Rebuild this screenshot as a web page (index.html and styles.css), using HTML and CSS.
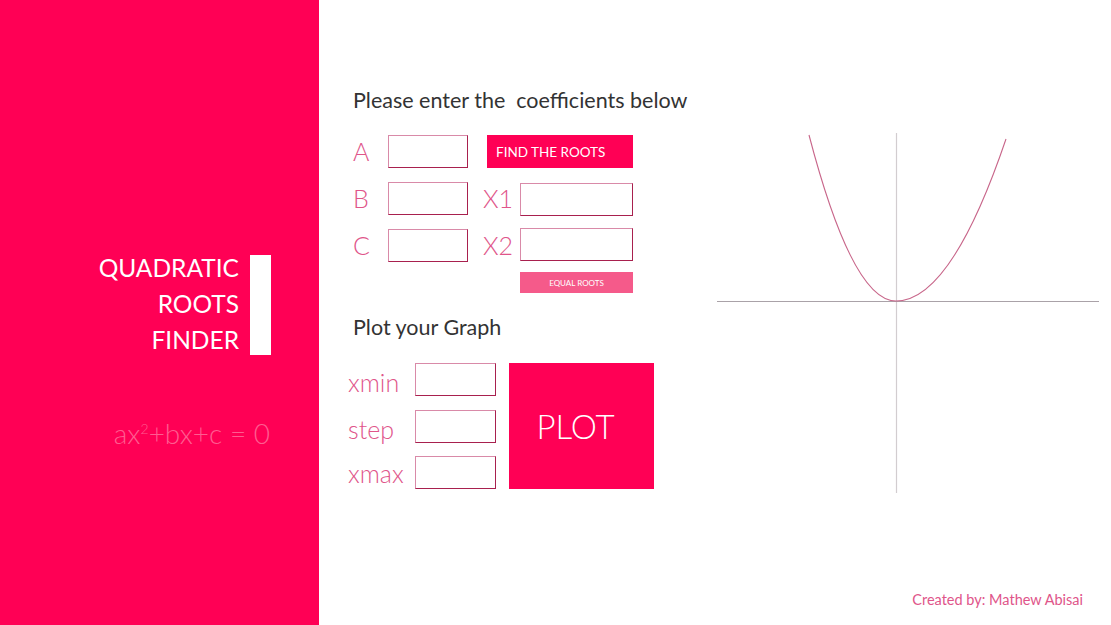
FILE: index.html
```html
<!DOCTYPE html>
<html lang="en">
<head>
<meta charset="utf-8">
<title>Quadratic Roots Finder</title>
<link rel="stylesheet" href="styles.css">
</head>
<body>
<div class="app">
  <aside class="sidebar">
    <div class="brand">
      <h1 class="brand-title">QUADRATIC<br>ROOTS<br>FINDER</h1>
      <div class="brand-bar"></div>
    </div>
    <div class="equation">ax<sup>2</sup>+bx+c = 0</div>
  </aside>
  <main class="content">
    <section class="forms">
      <h2 class="heading">Please enter the&nbsp; coefficients below</h2>
      <div class="coef-grid">
        <label class="lbl lbl-a">A</label>
        <div class="box box-a"></div>
        <button class="btn-find">FIND THE ROOTS</button>
        <label class="lbl lbl-b">B</label>
        <div class="box box-b"></div>
        <label class="lbl lbl-x1">X1</label>
        <div class="box box-x1"></div>
        <label class="lbl lbl-c">C</label>
        <div class="box box-c"></div>
        <label class="lbl lbl-x2">X2</label>
        <div class="box box-x2"></div>
        <button class="btn-equal">EQUAL ROOTS</button>
      </div>
      <h2 class="heading heading-plot">Plot your Graph</h2>
      <div class="plot-grid">
        <label class="lbl plbl r1">xmin</label>
        <div class="box pbox r1"></div>
        <label class="lbl plbl r2">step</label>
        <div class="box pbox r2"></div>
        <label class="lbl plbl r3">xmax</label>
        <div class="box pbox r3"></div>
        <button class="btn-plot">PLOT</button>
      </div>
    </section>
    <section class="graph">
      <svg class="graph-svg" width="382" height="360" viewBox="0 0 382 360">
        <line x1="179.5" y1="0" x2="179.5" y2="360" stroke="#d2cdd0" stroke-width="1.2"/>
        <line x1="0" y1="168.5" x2="382" y2="168.5" stroke="#aaa2a8" stroke-width="1.2"/>
        <path d="M92,2 Q135.5,168 179,168 Q234,168 289,6" fill="none" stroke="#c8668a" stroke-width="1.1"/>
      </svg>
    </section>
    <footer class="credit">Created by: Mathew Abisai</footer>
  </main>
</div>
</body>
</html>
```
FILE: styles.css
```css
* { box-sizing: border-box; }
html, body { margin: 0; padding: 0; }
body {
  font-family: "Lato", "Open Sans", "Liberation Sans", sans-serif;
  background: #ffffff;
  width: 1111px;
  height: 625px;
  overflow: hidden;
}
.app {
  display: flex;
  height: 625px;
}
.sidebar {
  width: 319px;
  flex: none;
  background: #ff0055;
  display: flex;
  flex-direction: column;
  align-items: flex-end;
  padding-top: 250px;
  padding-right: 48px;
}
.brand {
  display: flex;
  gap: 11px;
  align-items: flex-start;
}
.brand-title {
  margin: 0;
  font-weight: 400;
  font-size: 24.5px;
  line-height: 36px;
  color: #ffffff;
  text-align: right;
}
.brand-bar {
  width: 21px;
  height: 100px;
  margin-top: 5px;
  background: #ffffff;
}
.equation {
  margin-top: 60px;
  padding-right: 1px;
  font-size: 28px;
  line-height: 30px;
  color: #ff5c90;
  font-weight: 300;
}
.equation sup {
  font-size: 14px;
  line-height: 0;
  vertical-align: 10px;
}
.content {
  flex: 1;
  display: grid;
  grid-template-columns: 398px 382px;
  grid-template-rows: 1fr auto;
}
.forms {
  padding-left: 34px;
  padding-top: 88px;
}
.heading {
  margin: 0;
  font-weight: 400;
  font-size: 21.5px;
  line-height: 24px;
  color: #333333;
}
.lbl {
  color: #e0558a;
  font-size: 25px;
  line-height: 33px;
  font-weight: 300;
}
.box {
  height: 33px;
  background: #ffffff;
  border: 1px solid;
  border-color: #d98aa8 #a8204e #a8204e #d98aa8;
}
.coef-grid {
  margin-top: 23px;
  display: grid;
  grid-template-columns: 35px 80px 15px 37px 113px;
  grid-template-rows: 33px 33px 33px 21px;
  row-gap: 14px;
}
.lbl-a { grid-area: 1 / 1; }
.box-a { grid-area: 1 / 2; }
.btn-find {
  grid-area: 1 / 3 / 2 / 6;
  margin-left: 19px;
  border: 0;
  background: #ff0055;
  color: #ffffff;
  font-family: inherit;
  font-size: 13.5px;
  text-align: left;
  padding: 0 0 0 9px;
  height: 33px;
}
.lbl-b { grid-area: 2 / 1; }
.box-b { grid-area: 2 / 2; }
.lbl-x1 { grid-area: 2 / 3 / 3 / 5; padding-left: 15px; }
.box-x1 { grid-area: 2 / 5; margin-top: 1px; }
.lbl-c { grid-area: 3 / 1; }
.box-c { grid-area: 3 / 2; }
.lbl-x2 { grid-area: 3 / 3 / 4 / 5; padding-left: 15px; }
.box-x2 { grid-area: 3 / 5; margin-top: -1px; }
.btn-equal {
  grid-area: 4 / 5;
  margin-top: -4px;
  border: 0;
  background: #f55a8a;
  color: #ffffff;
  font-family: inherit;
  font-size: 8px;
  padding: 0;
  height: 21px;
}
.heading-plot {
  margin-top: 18px;
}
.plot-grid {
  margin-top: 24px;
  margin-left: -5px;
  display: grid;
  grid-template-columns: 67px 81px 13px 145px;
  grid-template-rows: 33px 33px 33px;
  row-gap: 13.5px;
}
.plbl { grid-column: 1; line-height: 38px; }
.pbox { grid-column: 2; }
.r1 { grid-row: 1; }
.r2 { grid-row: 2; }
.r3 { grid-row: 3; }
.plbl.r3 { line-height: 34px; }
.btn-plot {
  grid-area: 1 / 4 / 4 / 5;
  border: 0;
  background: #ff0055;
  color: #ffffff;
  font-family: inherit;
  font-size: 33px;
  font-weight: 300;
  padding: 0 12px 0 0;
}
.graph {
  padding-top: 133px;
}
.graph-svg { display: block; }
.credit {
  grid-column: 1 / 3;
  text-align: right;
  padding-right: 16px;
  padding-bottom: 16px;
  font-size: 14.5px;
  line-height: 18px;
  color: #e0558a;
}
```
